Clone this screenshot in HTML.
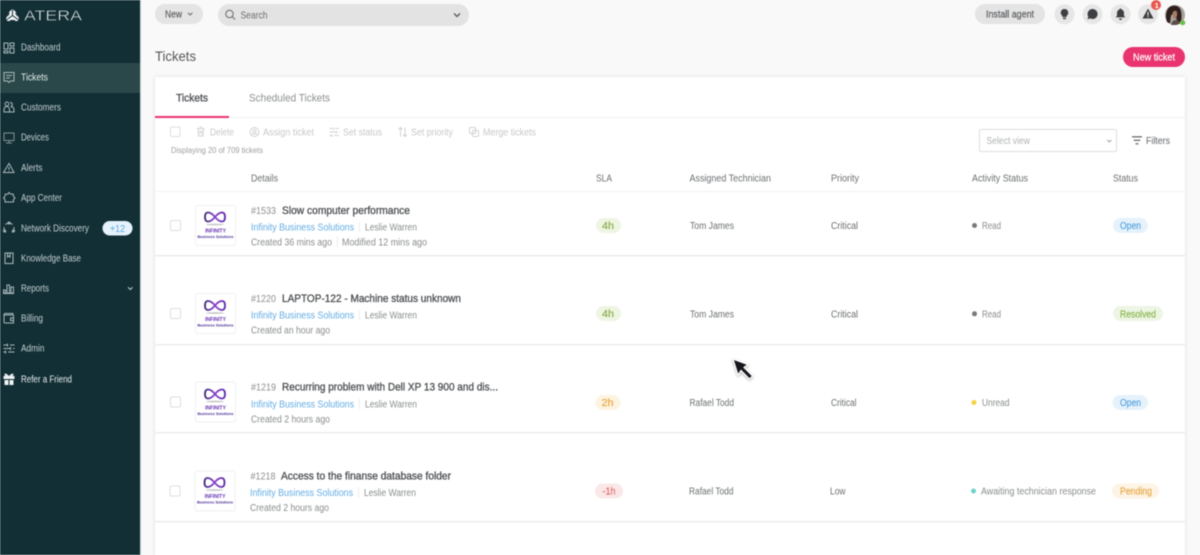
<!DOCTYPE html>
<html><head><meta charset="utf-8"><title>Tickets</title>
<style>
html,body{margin:0;padding:0;width:1200px;height:555px;overflow:hidden;background:#f9f9f9}
svg{display:block;filter:blur(.4px)}
text{font-family:"Liberation Sans",sans-serif;font-size:10px;fill:#77797c;white-space:pre}
.n{fill:#c3d0d1;font-size:10px}
.i{fill:none;stroke:#a8babb;stroke-width:1}
.t{fill:#c8c8c8}
.ti{fill:none;stroke:#d2d2d2;stroke-width:1}
.h{fill:#6c6e70}
.ttl{fill:#4b4d50;font-size:11px;stroke:#4b4d50;stroke-width:.3px}
.num{fill:#8c8e90}
.co{fill:#63ace4}
.g{fill:#8a8c8e}
</style></head>
<body>
<svg width="1200" height="555" viewBox="0 0 1200 555" xmlns="http://www.w3.org/2000/svg">
<defs>
<linearGradient id="pg" x1="0" x2="1" y1="0" y2="0"><stop offset="0" stop-color="#3d2a78"/><stop offset=".5" stop-color="#8a3fd0"/><stop offset="1" stop-color="#5c2aa8"/></linearGradient>
<filter id="cs" x="-5%" y="-5%" width="110%" height="110%"><feDropShadow dx="0" dy="0" stdDeviation="2" flood-color="#000" flood-opacity=".1"/></filter>
<filter id="ms" x="-50%" y="-50%" width="200%" height="200%"><feDropShadow dx="0" dy="1" stdDeviation="1.2" flood-color="#000" flood-opacity=".35"/></filter>
<g id="inf"><ellipse cx="215" cy="224.500" rx="9" ry=".9" fill="#c9c9c9"/><path d="M205 217c0-7 6-5 10 0s10 7 10 0-6-5-10 0-10 7-10 0z" fill="none" stroke="url(#pg)" stroke-width="1.800"/></g>
</defs>

<rect width="1200" height="555" fill="#f9f9f9"/>

<!-- sidebar -->
<rect width="140" height="555" fill="#132f36"/>
<rect x="140" width="1" height="555" fill="#c6d3d3"/>
<rect y="63" width="140" height="30" fill="#2a4849"/>

<!-- logo -->
<path d="M12.500 9l3 2.500 3.500 7-1.500 2.500h-10L6 18.500l3.500-7z" fill="#f2f5f5"/>
<path d="M12.500 15.500v-6M12.500 15.500l-5.500 4M12.500 15.500l5.500 4M9.500 13l-2 3M15.500 13l2 3M10 20.500h5" stroke="#132f36" stroke-width="1" fill="none"/>
<text x="24" y="20.300" textLength="58" lengthAdjust="spacingAndGlyphs" style="font-size:14.500px;fill:#f1f4f4;stroke:#132f36;stroke-width:.45px">ATERA</text>

<!-- nav -->
<g class="i">
<path d="M4 43h4v6H4zM10 43h4v3h-4zM4 51h4v2H4zM10 48h4v5h-4z"/>
<path d="M4 72.500h10v8.500H10.500L9 82.500 7.500 81H4zM6 75.500h6M6 78h4"/>
<path d="M4 112v-2.500c0-2 1.500-3 2.800-3s2.700 1 2.700 3V112zM5 104c0-1.200 1-2 1.900-2s1.900.8 1.900 2-1 2-1.900 2-1.900-.8-1.900-2zM10 102.500c1.500 0 2.300 1 2.300 2.100 0 1-.8 1.700-1.600 1.900 1.800.3 3.300 1.300 3.300 3V112h-4"/>
<path d="M4 133h10v7.500H4zM9 140.500v2.500M6 143h6" stroke="#7d9293"/>
<path d="M9 163.500l5 9H3.500zM9 167v3M9 171v.6"/>
<path d="M9 192.500l1.800 1.700 2.400-.2.300 2.400 1.500 1.600-1.500 1.600v2.400H5v-2.400l-1.500-1.600L5 196.400l.3-2.400 2.400.2z"/>
<path d="M5.500 224.500a5 5 0 0 1 7 0M13.800 227a5 5 0 0 1-2 5.300M6.200 232.300a5 5 0 0 1-2-5.300"/>
<circle cx="9" cy="223" r="1"/><circle cx="4.500" cy="231" r="1"/><circle cx="13.500" cy="231" r="1"/>
<path d="M5 253h8v10.500H5zM7.500 253v4l1.300-1 1.200 1v-4"/>
<path d="M3.500 293v-3h2v3zM7 293v-8h2.500v8zM11 293v-6h2.500v6zM3 293.500h11"/>
<path d="M4 315h9v-1.500H5c-1 0-1 1-1 1.500v6.500c0 1 .5 1.500 1.500 1.500H13.500v-7.500M10.500 318h3v2.500h-3z"/>
<path d="M3.500 345h4M10 345h4.500M3.500 348.500h7M13 348.500h1.500M3.500 352h2M8 352h6.500M7.500 343.500v3M10.500 347v3M5.500 350.500v3"/>
</g>
<g fill="#eef2f2"><rect x="3.500" y="376" width="11" height="3"/><rect x="4.500" y="380" width="4" height="5"/><rect x="9.500" y="380" width="4" height="5"/><path d="M9 376c-3-3-4-3-4.500-1.500S6 376 9 376c3 0 5-.2 4.500-1.500S12 373 9 376z"/></g>

<text class="n" x="21" y="50.500" textLength="39.500" lengthAdjust="spacingAndGlyphs">Dashboard</text>
<text class="n" x="21" y="80.500" textLength="27" lengthAdjust="spacingAndGlyphs" style="fill:#e6eded">Tickets</text>
<text class="n" x="21" y="110.700" textLength="40" lengthAdjust="spacingAndGlyphs">Customers</text>
<text class="n" x="21" y="140.700" textLength="28" lengthAdjust="spacingAndGlyphs">Devices</text>
<text class="n" x="21" y="171.200" textLength="21.500" lengthAdjust="spacingAndGlyphs">Alerts</text>
<text class="n" x="21" y="201.200" textLength="41" lengthAdjust="spacingAndGlyphs">App Center</text>
<text class="n" x="21" y="231.500" textLength="68" lengthAdjust="spacingAndGlyphs">Network Discovery</text>
<text class="n" x="21" y="261.500" textLength="60" lengthAdjust="spacingAndGlyphs">Knowledge Base</text>
<text class="n" x="21" y="291.500" textLength="28" lengthAdjust="spacingAndGlyphs">Reports</text>
<text class="n" x="21" y="321.700" textLength="22" lengthAdjust="spacingAndGlyphs">Billing</text>
<text class="n" x="21" y="351.700" textLength="23.500" lengthAdjust="spacingAndGlyphs">Admin</text>
<text class="n" x="21" y="382.700" textLength="51" lengthAdjust="spacingAndGlyphs" style="fill:#e6eded">Refer a Friend</text>
<rect x="102.500" y="221" width="30" height="14.500" rx="7.250" fill="#e6f3fc"/>
<text x="110" y="232" textLength="15" lengthAdjust="spacingAndGlyphs" style="fill:#5ea6e0;font-size:10px">+12</text>
<path d="M128 287.200l2.300 2.300 2.300-2.300" fill="none" stroke="#c3d0d1" stroke-width="1"/>

<!-- top bar -->
<rect x="155" y="4" width="48" height="20" rx="10" fill="#e4e4e4"/>
<text x="165" y="17.500" textLength="17" lengthAdjust="spacingAndGlyphs" style="fill:#5b5d60;stroke:#5b5d60;stroke-width:.2px">New</text>
<path d="M188 12.800l2.200 2.200 2.200-2.200" fill="none" stroke="#5b5d60" stroke-width=".9"/>
<rect x="218" y="4" width="251" height="22" rx="11" fill="#e3e3e3"/>
<circle cx="229.500" cy="14" r="3.700" fill="none" stroke="#67696c" stroke-width="1"/>
<path d="M232.300 16.800l2.700 2.700" stroke="#67696c" stroke-width="1"/>
<text x="240.500" y="18.500" textLength="27" lengthAdjust="spacingAndGlyphs" style="fill:#6b6d70">Search</text>
<path d="M454 13.500l3 3 3-3" fill="none" stroke="#55575a" stroke-width="1.300"/>

<rect x="975" y="4" width="70" height="20" rx="10" fill="#e4e4e4"/>
<text x="986" y="17.500" textLength="48" lengthAdjust="spacingAndGlyphs" style="fill:#5b5d60;stroke:#5b5d60;stroke-width:.2px">Install agent</text>
<circle cx="1064.500" cy="14.300" r="10" fill="#e6e6e6"/><circle cx="1092.500" cy="14.300" r="10" fill="#e6e6e6"/><circle cx="1120.500" cy="14.300" r="10" fill="#e6e6e6"/><circle cx="1148" cy="14.300" r="10" fill="#e6e6e6"/>
<g fill="#3d3f42">
<path d="M1064.500 9a3.700 3.700 0 0 1 2.200 6.700v1.300h-4.400v-1.300A3.700 3.700 0 0 1 1064.500 9z"/><rect x="1063" y="17.700" width="3" height="1.400"/>
<path d="M1092.500 9a5 5 0 1 1-2.300 9.400l-2.700.8.800-2.600a5 5 0 0 1 4.200-7.600z"/>
<path d="M1120.500 8.500c.6 0 1 .4 1 .9 1.700.6 2.500 2 2.500 3.600v2.700l1.300 1.700h-9.600l1.300-1.700V13c0-1.600.8-3 2.500-3.600 0-.5.400-.9 1-.9zM1119 18.500h3a1.500 1.500 0 0 1-3 0z"/>
<path d="M1148 8.500l5.500 10h-11zM1147.400 12v3.600h1.200V12zM1147.400 16.200v1.200h1.200v-1.200z" fill-rule="evenodd"/>
</g>
<circle cx="1156" cy="5" r="5" fill="#e8584f"/>
<text x="1154.600" y="7.800" style="fill:#fff;font-size:7.500px;font-weight:bold">1</text>
<circle cx="1175" cy="15" r="10" fill="#a8a29c"/>
<path d="M1167 22c-2-6-1-13 3.500-15.500 4-2 8.500-.5 10 3 1 3 1.500 8 .5 11.500l-3 2.500-2-6-2-5-3 3-1 8z" fill="#2d1f1d"/>
<path d="M1172.500 14c0-2 1.500-3.500 3.500-3.200 1 1 1.500 2.700 1 4.700l-1 3h-2.500z" fill="#a67c66"/>
<path d="M1171 25c.5-3 2.500-5 5-5s3.500 1.800 4 3.500l-4 1.500z" fill="#5c4b48"/>
<circle cx="1182.700" cy="22.700" r="2.600" fill="#6cc04a"/>

<!-- page heading -->
<text x="155" y="61" textLength="41" lengthAdjust="spacingAndGlyphs" style="font-size:14px;fill:#55575a">Tickets</text>
<rect x="1123" y="47" width="62" height="20" rx="10" fill="#ea3470"/>
<text x="1133" y="60.700" textLength="42" lengthAdjust="spacingAndGlyphs" style="fill:#fff;stroke:#fff;stroke-width:.2px;font-size:10px">New ticket</text>

<!-- card -->
<rect x="155" y="77" width="1030" height="490" fill="#fff" filter="url(#cs)"/>
<rect x="155" y="117" width="1030" height="1" fill="#f0f0f0"/>
<rect x="155" y="116" width="74" height="2" fill="#e8336d"/>
<text x="176" y="101.500" textLength="32" lengthAdjust="spacingAndGlyphs" style="font-size:11px;fill:#4b4d50;stroke:#4b4d50;stroke-width:.3px">Tickets</text>
<text x="249" y="101.500" textLength="81" lengthAdjust="spacingAndGlyphs" style="font-size:11px;fill:#8d8f91">Scheduled Tickets</text>

<!-- toolbar -->
<rect x="170.500" y="127" width="9.500" height="9.500" rx="1.500" fill="#fff" stroke="#dedede"/>
<g class="ti">
<path d="M197 128.500h7.500M198 128.500l.5 7.500h4.500l.5-7.500M199.500 127h2.500M200 130.500v3.500M201.800 130.500v3.500"/>
<circle cx="254.500" cy="132" r="4.500"/><circle cx="254.500" cy="131" r="1.500"/><path d="M251.500 135c.8-1.600 5.200-1.600 6 0"/>
<path d="M329.500 128.500h3M335 128.500h4M329.500 132h6.500M338 132h1M329.500 135.500h2M334 135.500h5M333.500 127.500v2.500M336.500 131v2.500M332 134.500v2.500"/>
<path d="M400.500 136.500v-9M398.500 129.500l2-2 2 2M405 127.500v9M403 134.500l2 2 2-2"/>
<rect x="469.500" y="127.500" width="6" height="6" rx="1"/><rect x="472.500" y="130.500" width="6" height="6" rx="1"/>
</g>
<text class="t" x="210" y="135.500" textLength="24" lengthAdjust="spacingAndGlyphs">Delete</text>
<text class="t" x="263" y="135.500" textLength="51" lengthAdjust="spacingAndGlyphs">Assign ticket</text>
<text class="t" x="343" y="135.500" textLength="39" lengthAdjust="spacingAndGlyphs">Set status</text>
<text class="t" x="411" y="135.500" textLength="42" lengthAdjust="spacingAndGlyphs">Set priority</text>
<text class="t" x="483" y="135.500" textLength="53" lengthAdjust="spacingAndGlyphs">Merge tickets</text>
<text x="171" y="153" textLength="92" lengthAdjust="spacingAndGlyphs" style="font-size:8.500px;fill:#9c9ea0">Displaying 20 of 709 tickets</text>

<rect x="979.500" y="129.500" width="137" height="22" rx="1.500" fill="#fff" stroke="#dfdfdf"/>
<text x="986.500" y="144.200" textLength="43.500" lengthAdjust="spacingAndGlyphs" style="fill:#b0b2b4">Select view</text>
<path d="M1107.300 140l2 2 2-2" fill="none" stroke="#9a9a9a" stroke-width=".9"/>
<path d="M1132 136.800h10M1133.700 140.300h6.600M1135.500 143.800h3" stroke="#55575a" stroke-width="1.200"/>
<text x="1146" y="144.200" textLength="24" lengthAdjust="spacingAndGlyphs" style="fill:#626467">Filters</text>

<!-- table header -->
<text class="h" x="251" y="181.500" textLength="27" lengthAdjust="spacingAndGlyphs">Details</text>
<text class="h" x="596" y="181.500" textLength="16" lengthAdjust="spacingAndGlyphs">SLA</text>
<text class="h" x="689.500" y="181.500" textLength="81.500" lengthAdjust="spacingAndGlyphs">Assigned Technician</text>
<text class="h" x="831" y="181.500" textLength="28" lengthAdjust="spacingAndGlyphs">Priority</text>
<text class="h" x="972" y="181.500" textLength="56" lengthAdjust="spacingAndGlyphs">Activity Status</text>
<text class="h" x="1113" y="181.500" textLength="25" lengthAdjust="spacingAndGlyphs">Status</text>
<rect x="155" y="191" width="1030" height="1" fill="#f2f2f2"/>
<rect x="155" y="255" width="1030" height="1.500" fill="#ececec"/>
<rect x="155" y="344" width="1030" height="1.500" fill="#ececec"/>
<rect x="155" y="432" width="1030" height="1.500" fill="#ececec"/>
<rect x="155" y="521" width="1030" height="1.500" fill="#ececec"/>

<!-- row 1 -->
<rect x="170.500" y="220.500" width="10" height="10" rx="1.500" fill="#fff" stroke="#dedede"/>
<rect x="195.500" y="205.500" width="40" height="40" rx="2" fill="#fff" stroke="#f0f0f0"/>
<use href="#inf"/>
<text x="215.500" y="232.500" text-anchor="middle" style="font-size:5px;font-weight:bold;fill:#6a35b5">INFINITY</text>
<text x="215.500" y="238.200" text-anchor="middle" style="font-size:3.900px;font-weight:bold;fill:#4b2f95">Business Solutions</text>
<text class="num" x="251" y="214.200" textLength="25" lengthAdjust="spacingAndGlyphs">#1533</text>
<text class="ttl" x="282" y="214.200" textLength="128" lengthAdjust="spacingAndGlyphs">Slow computer performance</text>
<text class="co" x="251" y="230.500" textLength="103" lengthAdjust="spacingAndGlyphs">Infinity Business Solutions</text>
<rect x="359" y="222" width="1" height="10" fill="#ececec"/>
<text class="g" x="365" y="230.500" textLength="52" lengthAdjust="spacingAndGlyphs">Leslie Warren</text>
<text class="g" x="251" y="245.500" textLength="81" lengthAdjust="spacingAndGlyphs">Created 36 mins ago</text>
<rect x="337" y="237" width="1" height="10" fill="#ececec"/>
<text class="g" x="342" y="245.500" textLength="85" lengthAdjust="spacingAndGlyphs">Modified 12 mins ago</text>
<rect x="596" y="218" width="25" height="15" rx="7.500" fill="#eef5e3"/>
<text x="602" y="229.200" textLength="12" lengthAdjust="spacingAndGlyphs" style="fill:#8fb04f;stroke:#8fb04f;stroke-width:.2px">4h</text>
<text class="h" x="690" y="229.200" textLength="44" lengthAdjust="spacingAndGlyphs">Tom James</text>
<text class="h" x="831" y="229.200" textLength="27" lengthAdjust="spacingAndGlyphs">Critical</text>
<circle cx="974.500" cy="225.500" r="2.500" fill="#77797c"/>
<text class="g" x="982" y="229.200" textLength="19" lengthAdjust="spacingAndGlyphs">Read</text>
<rect x="1113" y="218" width="35" height="15" rx="7.500" fill="#e6f2fb"/>
<text x="1120" y="229.200" textLength="21" lengthAdjust="spacingAndGlyphs" style="fill:#5ba5e0;stroke:#5ba5e0;stroke-width:.2px">Open</text>

<!-- row 2 -->
<rect x="170.500" y="308.500" width="10" height="10" rx="1.500" fill="#fff" stroke="#dedede"/>
<rect x="195.500" y="293.500" width="40" height="40" rx="2" fill="#fff" stroke="#f0f0f0"/>
<use href="#inf" y="88.500"/>
<text x="215.500" y="321" text-anchor="middle" style="font-size:5px;font-weight:bold;fill:#6a35b5">INFINITY</text>
<text x="215.500" y="326.700" text-anchor="middle" style="font-size:3.900px;font-weight:bold;fill:#4b2f95">Business Solutions</text>
<text class="num" x="251" y="302.200" textLength="25" lengthAdjust="spacingAndGlyphs">#1220</text>
<text class="ttl" x="282" y="302.200" textLength="179" lengthAdjust="spacingAndGlyphs">LAPTOP-122 - Machine status unknown</text>
<text class="co" x="251" y="318.500" textLength="103" lengthAdjust="spacingAndGlyphs">Infinity Business Solutions</text>
<rect x="359" y="310" width="1" height="10" fill="#ececec"/>
<text class="g" x="365" y="318.500" textLength="52" lengthAdjust="spacingAndGlyphs">Leslie Warren</text>
<text class="g" x="251" y="333.500" textLength="79" lengthAdjust="spacingAndGlyphs">Created an hour ago</text>
<rect x="596" y="306" width="25" height="15" rx="7.500" fill="#eef5e3"/>
<text x="602" y="317.200" textLength="12" lengthAdjust="spacingAndGlyphs" style="fill:#8fb04f;stroke:#8fb04f;stroke-width:.2px">4h</text>
<text class="h" x="690" y="317.500" textLength="44" lengthAdjust="spacingAndGlyphs">Tom James</text>
<text class="h" x="831" y="317.500" textLength="27" lengthAdjust="spacingAndGlyphs">Critical</text>
<circle cx="974.500" cy="313.800" r="2.500" fill="#77797c"/>
<text class="g" x="982" y="317.500" textLength="19" lengthAdjust="spacingAndGlyphs">Read</text>
<rect x="1113" y="306" width="50" height="15" rx="7.500" fill="#edf5e4"/>
<text x="1120" y="317.500" textLength="36" lengthAdjust="spacingAndGlyphs" style="fill:#8db653;stroke:#8db653;stroke-width:.2px">Resolved</text>

<!-- row 3 -->
<rect x="170.500" y="397" width="10" height="10" rx="1.500" fill="#fff" stroke="#dedede"/>
<rect x="195.500" y="382" width="40" height="40" rx="2" fill="#fff" stroke="#f0f0f0"/>
<use href="#inf" y="177"/>
<text x="215.500" y="409.500" text-anchor="middle" style="font-size:5px;font-weight:bold;fill:#6a35b5">INFINITY</text>
<text x="215.500" y="415.200" text-anchor="middle" style="font-size:3.900px;font-weight:bold;fill:#4b2f95">Business Solutions</text>
<text class="num" x="251" y="390.700" textLength="25" lengthAdjust="spacingAndGlyphs">#1219</text>
<text class="ttl" x="282" y="390.700" textLength="216" lengthAdjust="spacingAndGlyphs">Recurring problem with Dell XP 13 900 and dis...</text>
<text class="co" x="251" y="407.500" textLength="103" lengthAdjust="spacingAndGlyphs">Infinity Business Solutions</text>
<rect x="359" y="399" width="1" height="10" fill="#ececec"/>
<text class="g" x="365" y="407.500" textLength="52" lengthAdjust="spacingAndGlyphs">Leslie Warren</text>
<text class="g" x="251" y="422.500" textLength="79" lengthAdjust="spacingAndGlyphs">Created 2 hours ago</text>
<rect x="595.500" y="395" width="25" height="15" rx="7.500" fill="#fdf3e1"/>
<text x="601.500" y="406.200" textLength="12" lengthAdjust="spacingAndGlyphs" style="fill:#e8aa45;stroke:#e8aa45;stroke-width:.2px">2h</text>
<text class="h" x="689.500" y="406.200" textLength="44.500" lengthAdjust="spacingAndGlyphs">Rafael Todd</text>
<text class="h" x="831" y="406.200" textLength="25.500" lengthAdjust="spacingAndGlyphs">Critical</text>
<circle cx="974" cy="402.500" r="2.500" fill="#f5d33f"/>
<text class="g" x="982" y="406.200" textLength="27.500" lengthAdjust="spacingAndGlyphs">Unread</text>
<rect x="1112.500" y="395" width="35.500" height="15" rx="7.500" fill="#e6f2fb"/>
<text x="1120" y="406.200" textLength="21" lengthAdjust="spacingAndGlyphs" style="fill:#5ba5e0;stroke:#5ba5e0;stroke-width:.2px">Open</text>

<!-- row 4 -->
<rect x="170" y="486" width="10" height="10" rx="1.500" fill="#fff" stroke="#dedede"/>
<rect x="195" y="471" width="40" height="40" rx="2" fill="#fff" stroke="#f0f0f0"/>
<use href="#inf" x="-.5" y="265.500"/>
<text x="215" y="498" text-anchor="middle" style="font-size:5px;font-weight:bold;fill:#6a35b5">INFINITY</text>
<text x="215" y="503.700" text-anchor="middle" style="font-size:3.900px;font-weight:bold;fill:#4b2f95">Business Solutions</text>
<text class="num" x="250.500" y="479.700" textLength="25" lengthAdjust="spacingAndGlyphs">#1218</text>
<text class="ttl" x="281" y="479.700" textLength="170" lengthAdjust="spacingAndGlyphs">Access to the finanse database folder</text>
<text class="co" x="250" y="496" textLength="103" lengthAdjust="spacingAndGlyphs">Infinity Business Solutions</text>
<rect x="358" y="487.500" width="1" height="10" fill="#ececec"/>
<text class="g" x="364" y="496" textLength="52" lengthAdjust="spacingAndGlyphs">Leslie Warren</text>
<text class="g" x="250" y="511.200" textLength="79" lengthAdjust="spacingAndGlyphs">Created 2 hours ago</text>
<rect x="595" y="483.500" width="28" height="15" rx="7.500" fill="#fae8e9"/>
<text x="602.500" y="494.700" textLength="13" lengthAdjust="spacingAndGlyphs" style="fill:#e46a6a;stroke:#e46a6a;stroke-width:.2px">-1h</text>
<text class="h" x="689" y="494.700" textLength="44.500" lengthAdjust="spacingAndGlyphs">Rafael Todd</text>
<text class="h" x="830" y="494.700" textLength="15.500" lengthAdjust="spacingAndGlyphs">Low</text>
<circle cx="973.500" cy="491" r="2.500" fill="#6dd3cb"/>
<text class="g" x="981" y="494.700" textLength="115" lengthAdjust="spacingAndGlyphs">Awaiting technician response</text>
<rect x="1112" y="483.500" width="47" height="15" rx="7.500" fill="#fdf4e6"/>
<text x="1120" y="494.700" textLength="32" lengthAdjust="spacingAndGlyphs" style="fill:#e9a94a;stroke:#e9a94a;stroke-width:.2px">Pending</text>

<!-- cursor -->
<path d="M733 359l15 5.500-4 3 8.500 8.500-3 3-8.500-8.500-3 4.500z" fill="#14171a" stroke="#fff" stroke-width="1.200" filter="url(#ms)"/>
</svg>
</body></html>
